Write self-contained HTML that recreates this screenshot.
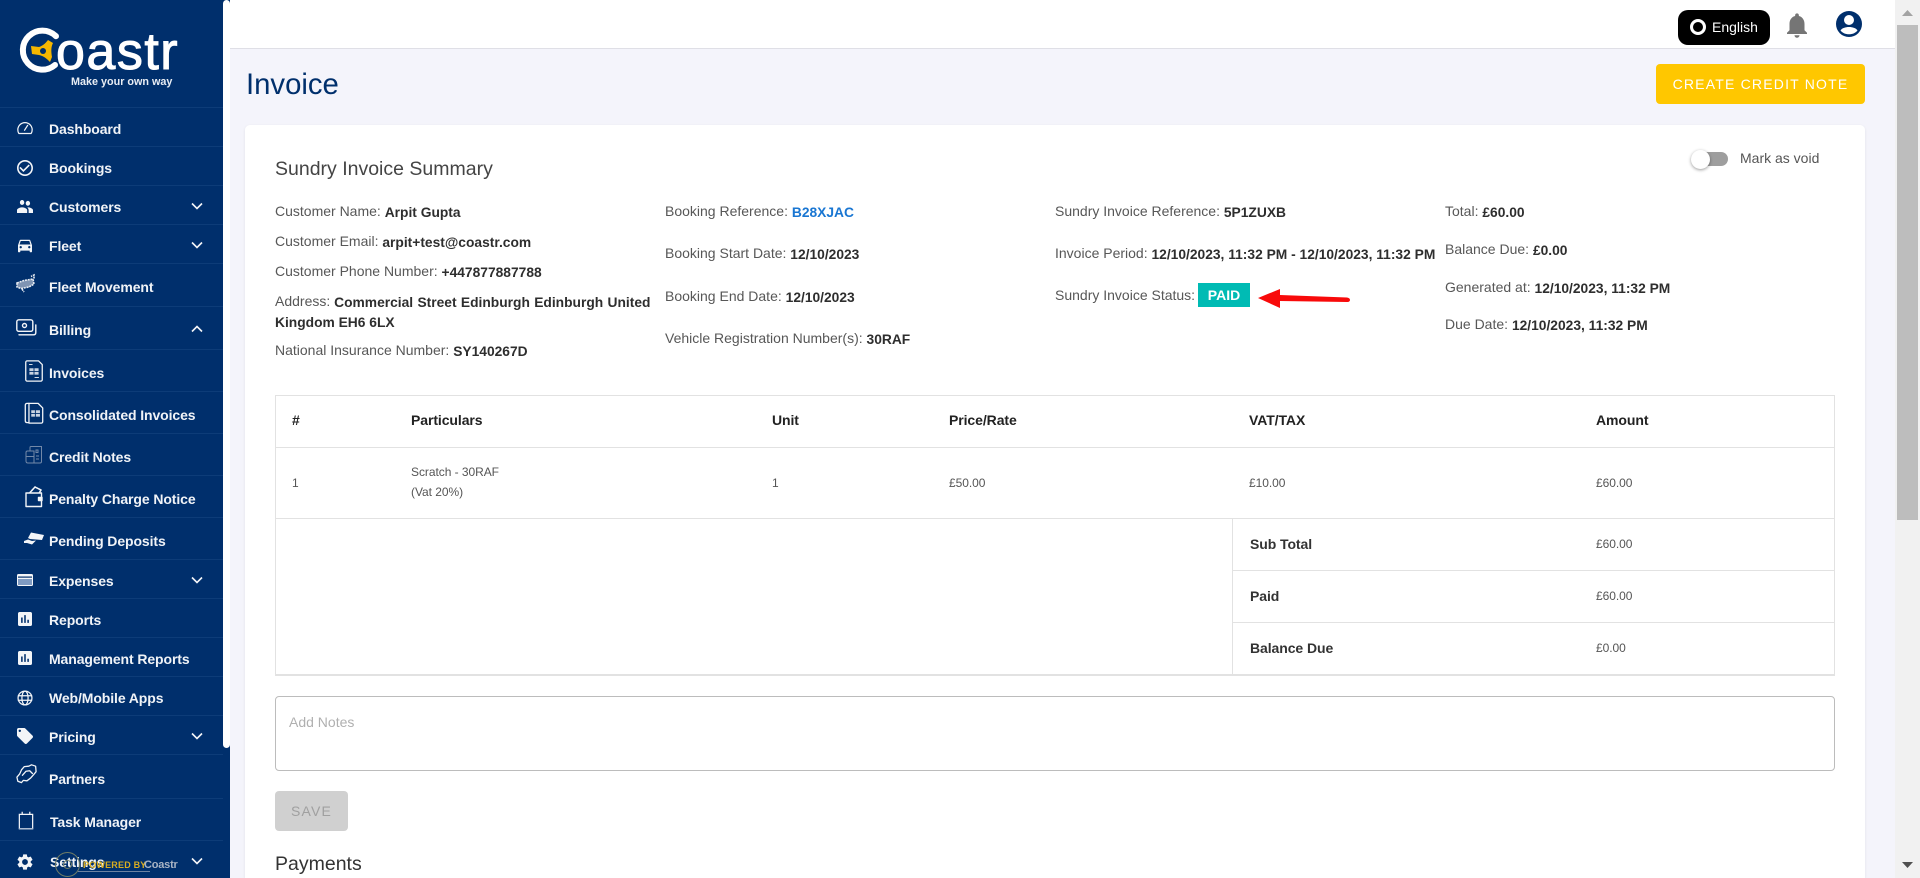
<!DOCTYPE html>
<html lang="en"><head><meta charset="utf-8"><title>Invoice</title>
<style>
*{box-sizing:border-box}
html,body{margin:0;padding:0;width:1920px;height:878px;overflow:hidden;background:#f4f4fb;font-family:"Liberation Sans",Arial,sans-serif}
#wrap{position:relative;width:1920px;height:878px;overflow:hidden;background:#f4f4fb}
.a{position:absolute}
#side{left:0;top:0;width:230px;height:878px;background:#002f6c;overflow:hidden}
#thumb{left:223px;top:0;width:7px;height:748px;background:#fff;border-radius:4px}
.ln{position:absolute;left:0;width:223px;height:1px;background:#0d3c78}
.m{position:absolute;left:49px;height:20px;line-height:20px;font-size:14px;font-weight:700;color:#f0f3f7;white-space:nowrap;letter-spacing:-.1px}
.ic{position:absolute;fill:#f3f5f8}
.st{position:absolute;fill:none;stroke:#f3f5f8;stroke-width:1.4;stroke-linecap:round;stroke-linejoin:round}
.ch{position:absolute;left:191px;width:12px;height:8px;fill:none;stroke:#f3f5f8;stroke-width:1.6}
#top{left:230px;top:0;width:1665px;height:49px;background:#fff;border-bottom:1px solid #dfdfe6}
#sb{left:1895px;top:0;width:25px;height:878px;background:#f1f1f1}
#card{left:245px;top:125px;width:1620px;height:753px;background:#fff;border-radius:5px 5px 0 0;box-shadow:0 1px 3px rgba(0,0,0,.08)}
.r{position:absolute;height:20px;line-height:20px;font-size:14px;color:#575757;white-space:nowrap}
.r b{color:#2e2e2e;font-size:13.8px;position:relative;top:1px}
.h{position:absolute;height:20px;line-height:20px;font-size:14px;font-weight:700;color:#222;white-space:nowrap;letter-spacing:-.08px}
.t{position:absolute;height:20px;line-height:20px;font-size:12px;color:#555;white-space:nowrap;letter-spacing:-.05px}
.tl{position:absolute;background:#e2e2e2}
</style></head><body>
<div id="wrap">
<div id="side" class="a">
  <svg class="a" style="left:15px;top:22px" width="60" height="60" viewBox="0 0 60 60">
    <path d="M41 14.2A19.5 19.5 0 1 0 40 43" fill="none" stroke="#fff" stroke-width="6" stroke-linecap="round"/>
    <path d="M16 24L24 25C27 24 30 22 33 18L38 21C36 25 36 29 37 35L35 40C32 37 29 34 24 33L17 32Z" fill="#f5b700"/>
    <circle cx="28" cy="29" r="3" fill="#002f6c"/>
  </svg>
  <div class="a" style="left:56px;top:22px;font-size:52px;line-height:60px;font-weight:400;color:#fff;letter-spacing:1.5px;-webkit-text-stroke:1px #fff;white-space:nowrap">oastr</div>
  <div class="a" style="left:71px;top:74px;font-size:10.8px;line-height:16px;font-weight:700;color:#e8edf4;white-space:nowrap">Make your own way</div>

  <div class="ln" style="top:107px"></div><div class="ln" style="top:146px"></div><div class="ln" style="top:185px"></div><div class="ln" style="top:224px"></div><div class="ln" style="top:263px"></div><div class="ln" style="top:306px"></div><div class="ln" style="top:349px"></div><div class="ln" style="top:391px"></div><div class="ln" style="top:433px"></div><div class="ln" style="top:475px"></div><div class="ln" style="top:517px"></div><div class="ln" style="top:559px"></div><div class="ln" style="top:598px"></div><div class="ln" style="top:637px"></div><div class="ln" style="top:676px"></div><div class="ln" style="top:715px"></div><div class="ln" style="top:754px"></div><div class="ln" style="top:798px"></div><div class="ln" style="top:840px"></div>

  <div class="m" style="top:119px">Dashboard</div>
  <div class="m" style="top:158px">Bookings</div>
  <div class="m" style="top:197px">Customers</div>
  <div class="m" style="top:236px">Fleet</div>
  <div class="m" style="top:277px">Fleet Movement</div>
  <div class="m" style="top:320px">Billing</div>
  <div class="m" style="top:363px">Invoices</div>
  <div class="m" style="top:405px">Consolidated Invoices</div>
  <div class="m" style="top:447px">Credit Notes</div>
  <div class="m" style="top:489px">Penalty Charge Notice</div>
  <div class="m" style="top:531px">Pending Deposits</div>
  <div class="m" style="top:571px">Expenses</div>
  <div class="m" style="top:610px">Reports</div>
  <div class="m" style="top:649px">Management Reports</div>
  <div class="m" style="top:688px">Web/Mobile Apps</div>
  <div class="m" style="top:727px">Pricing</div>
  <div class="m" style="top:769px">Partners</div>
  <div class="m" style="top:812px;left:50px">Task Manager</div>
  <div class="m" style="top:852px;left:50px">Settings</div>

  <!-- dashboard gauge -->
  <svg class="st" style="left:17px;top:121px" width="16" height="14" viewBox="0 0 18 16"><path d="M2 14.3C.8 12.8.8 11 .8 10A8.200 8.200 0 0 1 17.2 10C17.2 11 17.2 12.800 16 14.3Z"/><path d="M8.5 10.5L12 5"/></svg>
  <!-- check circle -->
  <svg class="ic" style="left:17px;top:160px" width="16" height="16" viewBox="2 2 20 20"><path d="M16.59 7.58L10 14.17l-3.59-3.58L5 12l5 5 8-8zM12 2C6.48 2 2 6.48 2 12s4.48 10 10 10 10-4.48 10-10S17.52 2 12 2zm0 18c-4.42 0-8-3.58-8-8s3.58-8 8-8 8 3.58 8 8-3.58 8-8 8z"/></svg>
  <!-- people -->
  <svg class="ic" style="left:17px;top:200px" width="16" height="13" viewBox="1 4 22 16" preserveAspectRatio="none"><path d="M16 11c1.66 0 2.99-1.34 2.99-3S17.66 5 16 5c-1.66 0-3 1.34-3 3s1.34 3 3 3zm-8-1c1.66 0 3-1.34 3-3S9.66 4 8 4 5 5.340 5 7s1.34 3 3 3zm0 3c-2.33 0-7 1.17-7 3.5V20h14v-3.5c0-2.33-4.67-3.5-7-3.5zm8 0c-.29 0-.62.02-.97.05 1.16.84 1.97 1.97 1.97 3.45V20h6v-3.5c0-2.33-4.67-3.5-7-3.5z"/></svg>
  <!-- car -->
  <svg class="ic" style="left:18px;top:239px" width="14" height="14" viewBox="3 5 18 16"><path d="M18.92 6.01C18.72 5.42 18.16 5 17.5 5h-11c-.66 0-1.21.42-1.42 1.01L3 12v8c0 .55.45 1 1 1h1c.55 0 1-.45 1-1v-1h12v1c0 .55.45 1 1 1h1c.55 0 1-.45 1-1v-8l-2.08-5.99zM6.5 16c-.83 0-1.5-.67-1.5-1.5S5.67 13 6.5 13s1.5.67 1.5 1.5S7.33 16 6.5 16zm11 0c-.83 0-1.5-.67-1.5-1.5s.67-1.5 1.5-1.5 1.5.67 1.5 1.5-.67 1.5-1.5 1.5zM5 11l1.5-4.5h11L19 11H5z"/></svg>
  <!-- fleet movement -->
  <svg class="a" style="left:15px;top:273px" width="22" height="20" viewBox="0 0 22 20" fill="#7f94b3" stroke="#e6ebf2" stroke-width="1.6" stroke-dasharray="2 .8"><path d="M2 10L9 7.5L18 6L19 11L14 14L6 15.5L2 14Z"/><path fill="none" d="M19 5.5L19 2L16 3.5M7 16L9 19"/></svg>
  <!-- billing -->
  <svg class="st" style="left:16px;top:319px" width="21" height="18" viewBox="0 0 21 18"><rect x=".8" y=".8" width="16" height="11.5" rx="2"/><circle cx="8.500" cy="6.500" r="2"/><path d="M3 15.8H17.5C19 15.8 19.8 15 19.8 13.5V6"/></svg>
  <!-- invoices -->
  <svg class="st" style="left:24px;top:360px" width="20" height="22" viewBox="0 0 20 24"><path d="M2.5 1H15L19 5V21.500C19 22.300 18.300 23 17.500 23H2.500C1.700 23 1 22.300 1 21.500V2.500C1 1.700 1.700 1 2.500 1Z"/><rect x="5" y="9" width="10" height="7" fill="#c9d3e2" stroke="none"/><path d="M5 12.500H15M10 9V16" stroke="#002f6c" stroke-width="1"/><path d="M5 5H8M11 19H15" stroke-width="1"/></svg>
  <!-- consolidated -->
  <svg class="st" style="left:24px;top:402px" width="20" height="22" viewBox="0 0 21 24"><path d="M5 1.500H15L20 6.500V21.500C20 22.300 19.300 23 18.500 23H5V2Z"/><path d="M5 1.500H3C1.800 1.500 1 2.300 1 3.500V20.500C1 21.700 1.800 22.500 3 22.500H5"/><rect x="7.500" y="9" width="9.500" height="7" fill="#c9d3e2" stroke="none"/><path d="M7.500 12.500H17M12 9V16" stroke="#002f6c" stroke-width="1"/></svg>
  <!-- credit notes -->
  <svg class="a" style="left:25px;top:446px" width="18" height="18" viewBox="0 0 18 18" fill="none" stroke="#7288a8" stroke-width="1"><path d="M5 5V1.500C5 1 5.500 .5 6 .5H16.500V15.500C16.500 16.500 16 17 15 17H3C1.800 17 1 16.200 1 15V6.500C1 5.800 1.500 5 2.500 5H9V17M1 10.500H9M11 4H13V6.500H11ZM11 10H14M11 13H14"/></svg>
  <!-- penalty -->
  <svg class="st" style="left:25px;top:486px" width="18" height="22" viewBox="0 0 18 22" stroke-width="1.100"><path d="M1 7H16.500V20.500H1Z"/><path d="M5 6.500L10 1L16 4L14.500 6.500" stroke-dasharray="1.500 .8" stroke-width="1.600"/><rect x="13.500" y="11.500" width="3.500" height="3" fill="#f3f5f8"/></svg>
  <!-- pending deposits -->
  <svg class="ic" style="left:24px;top:532px" width="20" height="14" viewBox="0 0 20 14"><path d="M7 .5L20 3L18 8L6 7L4 6ZM0 9L4 7.500L8 9L12 8.500L8 12.500L3 11H0Z"/></svg>
  <!-- credit card -->
  <svg class="a" style="left:17px;top:574px" width="16" height="12" viewBox="0 0 16 12"><rect x="0" y="0" width="16" height="12" rx="1.500" fill="#f3f5f8"/><rect x="1" y="5" width="14" height="6" fill="#7f9bc2"/><rect x="1" y="2.500" width="14" height="1.200" fill="#002f6c"/></svg>
  <!-- assessment -->
  <svg class="ic" style="left:18px;top:612px" width="14" height="14" viewBox="3 3 18 18"><path d="M19 3H5c-1.1 0-2 .9-2 2v14c0 1.1.9 2 2 2h14c1.1 0 2-.9 2-2V5c0-1.1-.9-2-2-2zM9 17H7v-7h2v7zm4 0h-2V7h2v10zm4 0h-2v-4h2v4z"/></svg>
  <svg class="ic" style="left:18px;top:651px" width="14" height="14" viewBox="3 3 18 18"><path d="M19 3H5c-1.1 0-2 .9-2 2v14c0 1.1.9 2 2 2h14c1.1 0 2-.9 2-2V5c0-1.1-.9-2-2-2zM9 17H7v-7h2v7zm4 0h-2V7h2v10zm4 0h-2v-4h2v4z"/></svg>
  <!-- globe -->
  <svg class="st" style="left:17px;top:690px" width="16" height="16" viewBox="0 0 18 18"><circle cx="9" cy="9" r="7.800"/><ellipse cx="9" cy="9" rx="3.500" ry="7.800"/><path d="M1.500 6.500H16.500M1.500 11.500H16.500"/></svg>
  <!-- tag -->
  <svg class="ic" style="left:17px;top:728px" width="16" height="16" viewBox="2 2 20 20"><path d="M21.41 11.58l-9-9C12.05 2.22 11.55 2 11 2H4c-1.1 0-2 .9-2 2v7c0 .55.22 1.05.59 1.42l9 9c.36.36.86.58 1.41.58.55 0 1.05-.22 1.41-.59l7-7c.37-.36.59-.86.59-1.41 0-.55-.23-1.06-.59-1.42zM5.5 7C4.67 7 4 6.33 4 5.5S4.67 4 5.5 4 7 4.67 7 5.5 6.33 7 5.5 7z"/></svg>
  <!-- partners -->
  <svg class="st" style="left:16px;top:763px" width="21" height="21" viewBox="0 0 23 22" stroke-width="1.800"><path d="M6 7L9 3.500L14 3L17 1.500L21.500 3L22 9L19.500 12L16 16L12 19L8 18.500L6 21L2 19.500L1 15L4 11.500Z"/><path d="M7 13L11 8.500L15 8L18 11"/></svg>
  <!-- calendar -->
  <svg class="a" style="left:18px;top:811px" width="16" height="19" viewBox="0 0 16 20" fill="none"><path d="M1 3.500H15V18.500H1Z" stroke="#f3f5f8" stroke-width="1.300"/><path d="M4 .8V4M12 .8V4" stroke="#f3f5f8" stroke-width="1.300"/><path d="M.5 18.800H15.500" stroke="#9fb2cc" stroke-width="1.500"/></svg>
  <!-- gear -->
  <svg class="ic" style="left:17px;top:854px" width="16" height="16" viewBox="2 2 20 20"><path d="M19.14 12.94c.04-.3.06-.61.06-.94 0-.32-.02-.64-.07-.94l2.03-1.58c.18-.14.23-.41.12-.61l-1.92-3.32c-.12-.22-.37-.29-.59-.22l-2.39.96c-.5-.38-1.03-.7-1.62-.94l-.36-2.54c-.04-.24-.24-.41-.48-.41h-3.84c-.24 0-.43.17-.47.41l-.36 2.54c-.59.24-1.13.57-1.62.94l-2.39-.96c-.22-.08-.47 0-.59.22L2.74 8.87c-.12.21-.08.47.12.61l2.03 1.58c-.05.3-.09.63-.09.94s.02.64.07.94l-2.03 1.58c-.18.14-.23.41-.12.61l1.92 3.32c.12.22.37.29.59.22l2.39-.96c.5.38 1.03.7 1.62.94l.36 2.54c.05.24.24.41.48.41h3.84c.24 0 .44-.17.47-.41l.36-2.54c.59-.24 1.13-.56 1.62-.94l2.39.96c.22.08.47 0 .59-.22l1.92-3.32c.12-.22.07-.47-.12-.61l-2.01-1.58zM12 15.6c-1.98 0-3.6-1.62-3.6-3.6s1.62-3.6 3.6-3.6 3.6 1.62 3.6 3.6-1.62 3.6-3.6 3.6z"/></svg>

  <!-- chevrons -->
  <svg class="ch" style="top:202px" viewBox="0 0 12 8"><path d="M1 1.500L6 6.500L11 1.500"/></svg>
  <svg class="ch" style="top:241px" viewBox="0 0 12 8"><path d="M1 1.500L6 6.500L11 1.500"/></svg>
  <svg class="ch" style="top:325px" viewBox="0 0 12 8"><path d="M1 6.500L6 1.500L11 6.500"/></svg>
  <svg class="ch" style="top:576px" viewBox="0 0 12 8"><path d="M1 1.500L6 6.500L11 1.500"/></svg>
  <svg class="ch" style="top:732px" viewBox="0 0 12 8"><path d="M1 1.500L6 6.500L11 1.500"/></svg>
  <svg class="ch" style="top:857px" viewBox="0 0 12 8"><path d="M1 1.500L6 6.500L11 1.500"/></svg>

  <!-- powered by -->
  <svg class="a" style="left:54px;top:851px" width="27" height="27" viewBox="0 0 27 27" fill="none" stroke="#6f7c66" stroke-width="1"><circle cx="13.500" cy="13.500" r="12"/><circle cx="13.500" cy="13.500" r="4"/></svg>
  <div class="a" style="left:83px;top:857px;font-size:9px;line-height:16px;font-weight:700;color:#d9ad20;letter-spacing:.2px;white-space:nowrap">POWERED BY</div>
  <div class="a" style="left:144px;top:856px;font-size:11px;line-height:18px;font-weight:700;color:#a9b4c4;letter-spacing:-.2px;white-space:nowrap">Coastr</div>
  <div class="a" style="left:78px;top:871px;width:72px;height:1px;background:#6d82a1"></div>
  <div id="thumb" class="a"></div>
</div>

<div id="top" class="a"></div>
<div class="a" style="left:1678px;top:10px;width:92px;height:35px;background:#000;border-radius:10px"></div>
<div class="a" style="left:1690px;top:19px;width:16px;height:16px;border:3px solid #fff;border-radius:50%"></div>
<div class="a" style="left:1712px;top:17px;height:20px;line-height:20px;font-size:14px;color:#fff;white-space:nowrap">English</div>
<svg class="a" style="left:1787px;top:13px" width="20" height="25" viewBox="4 2.5 16 19.5"><path fill="#757575" d="M12 22c1.1 0 2-.9 2-2h-4c0 1.1.9 2 2 2zm6-6v-5c0-3.07-1.63-5.64-4.5-6.32V4c0-.83-.67-1.5-1.5-1.5s-1.5.67-1.5 1.5v.68C7.64 5.36 6 7.92 6 11v5l-2 2v1h16v-1l-2-2z"/></svg>
<svg class="a" style="left:1836px;top:11px" width="26" height="26" viewBox="0 0 26 26"><circle cx="13" cy="13" r="13" fill="#002f6c"/><circle cx="13" cy="9" r="5" fill="#fff"/><path d="M4.500 19.500C6 17 9.500 16 13 16C16.500 16 20 17 21.500 19.500C19.500 22 16.500 23.300 13 23.300C9.500 23.300 6.500 22 4.500 19.500Z" fill="#fff"/></svg>

<div class="a" style="left:246px;top:65px;height:40px;line-height:40px;font-size:29.3px;color:#002f6c;white-space:nowrap">Invoice</div>
<div class="a" style="left:1656px;top:64px;width:209px;height:40px;background:#ffc700;border-radius:4px;color:#fff;font-size:14px;line-height:40px;text-align:center;letter-spacing:1.2px;white-space:nowrap">CREATE CREDIT NOTE</div>

<div id="card" class="a"></div>

<div class="a" style="left:275px;top:156px;height:26px;line-height:26px;font-size:19.5px;color:#444;white-space:nowrap">Sundry Invoice Summary</div>

<!-- switch -->
<div class="a" style="left:1695px;top:152px;width:33px;height:14px;background:#9e9e9e;border-radius:7px"></div>
<div class="a" style="left:1691px;top:150px;width:19px;height:19px;background:#fff;border-radius:50%;box-shadow:0 1px 3px rgba(0,0,0,.4)"></div>
<div class="r" style="left:1740px;top:148px;color:#555">Mark as void</div>

<!-- col 1 -->
<div class="r" style="left:275px;top:201px">Customer Name: <b>Arpit Gupta</b></div>
<div class="r" style="left:275px;top:231px">Customer Email: <b>arpit+test@coastr.com</b></div>
<div class="r" style="left:275px;top:261px">Customer Phone Number: <b>+447877887788</b></div>
<div class="r" style="left:275px;top:291px">Address: <b style="word-spacing:.5px">Commercial Street Edinburgh Edinburgh United</b></div>
<div class="r" style="left:275px;top:311px"><b>Kingdom EH6 6LX</b></div>
<div class="r" style="left:275px;top:340px">National Insurance Number: <b>SY140267D</b></div>
<!-- col 2 -->
<div class="r" style="left:665px;top:201px">Booking Reference: <b style="color:#1976d2">B28XJAC</b></div>
<div class="r" style="left:665px;top:243px">Booking Start Date: <b>12/10/2023</b></div>
<div class="r" style="left:665px;top:286px">Booking End Date: <b>12/10/2023</b></div>
<div class="r" style="left:665px;top:328px">Vehicle Registration Number(s): <b>30RAF</b></div>
<!-- col 3 -->
<div class="r" style="left:1055px;top:201px">Sundry Invoice Reference: <b>5P1ZUXB</b></div>
<div class="r" style="left:1055px;top:243px">Invoice Period: <b>12/10/2023, 11:32 PM - 12/10/2023, 11:32 PM</b></div>
<div class="r" style="left:1055px;top:285px">Sundry Invoice Status:</div>
<div class="a" style="left:1198px;top:283px;width:52px;height:24px;line-height:25px;background:#00bbb4;color:#fff;font-size:14px;font-weight:700;text-align:center">PAID</div>
<svg class="a" style="left:1256px;top:285px" width="95" height="24" viewBox="0 0 95 24"><path d="M2 13L24 4V10L91 12.500C93 12.800 94 13.800 94 15C94 16.200 93 17.200 91 17L24 16V23Z" fill="#f80a0a"/></svg>
<!-- col 4 -->
<div class="r" style="left:1445px;top:201px">Total: <b>£60.00</b></div>
<div class="r" style="left:1445px;top:239px">Balance Due: <b>£0.00</b></div>
<div class="r" style="left:1445px;top:277px">Generated at: <b>12/10/2023, 11:32 PM</b></div>
<div class="r" style="left:1445px;top:314px">Due Date: <b>12/10/2023, 11:32 PM</b></div>

<!-- table -->
<div class="tl" style="left:275px;top:395px;width:1560px;height:1px"></div>
<div class="tl" style="left:275px;top:447px;width:1560px;height:1px"></div>
<div class="tl" style="left:275px;top:518px;width:1560px;height:1px"></div>
<div class="tl" style="left:1232px;top:570px;width:603px;height:1px"></div>
<div class="tl" style="left:1232px;top:622px;width:603px;height:1px"></div>
<div class="tl" style="left:275px;top:674px;width:1560px;height:2px"></div>
<div class="tl" style="left:275px;top:395px;width:1px;height:281px"></div>
<div class="tl" style="left:1834px;top:395px;width:1px;height:281px"></div>
<div class="tl" style="left:1232px;top:518px;width:1px;height:157px"></div>

<div class="h" style="left:292px;top:410px">#</div>
<div class="h" style="left:411px;top:410px">Particulars</div>
<div class="h" style="left:772px;top:410px">Unit</div>
<div class="h" style="left:949px;top:410px">Price/Rate</div>
<div class="h" style="left:1249px;top:410px">VAT/TAX</div>
<div class="h" style="left:1596px;top:410px">Amount</div>

<div class="t" style="left:292px;top:473px">1</div>
<div class="t" style="left:411px;top:462px">Scratch - 30RAF</div>
<div class="t" style="left:411px;top:482px">(Vat 20%)</div>
<div class="t" style="left:772px;top:473px">1</div>
<div class="t" style="left:949px;top:473px">£50.00</div>
<div class="t" style="left:1249px;top:473px">£10.00</div>
<div class="t" style="left:1596px;top:473px">£60.00</div>

<div class="h" style="left:1250px;top:534px;color:#333">Sub Total</div>
<div class="t" style="left:1596px;top:534px">£60.00</div>
<div class="h" style="left:1250px;top:586px;color:#333">Paid</div>
<div class="t" style="left:1596px;top:586px">£60.00</div>
<div class="h" style="left:1250px;top:638px;color:#333">Balance Due</div>
<div class="t" style="left:1596px;top:638px">£0.00</div>

<!-- notes -->
<div class="a" style="left:275px;top:696px;width:1560px;height:75px;border:1px solid #bcbcbc;border-radius:4px;background:#fff"></div>
<div class="a" style="left:289px;top:712px;height:20px;line-height:20px;font-size:14px;color:#b0b0b0;white-space:nowrap">Add Notes</div>
<div class="a" style="left:275px;top:791px;width:73px;height:40px;background:#d0d0d0;border-radius:4px;color:#a0a0a0;font-size:14px;line-height:40px;text-align:center;letter-spacing:1.2px">SAVE</div>
<div class="a" style="left:275px;top:851px;height:26px;line-height:26px;font-size:19.5px;color:#333;white-space:nowrap">Payments</div>

<!-- page scrollbar -->
<div id="sb" class="a"></div>
<svg class="a" style="left:1901px;top:9px" width="13" height="8" viewBox="0 0 13 8"><path d="M6.5 1L12 7H1Z" fill="#a3a3a3"/></svg>
<div class="a" style="left:1897px;top:25px;width:21px;height:495px;background:#bdbdbd"></div>
<svg class="a" style="left:1901px;top:861px" width="13" height="8" viewBox="0 0 13 8"><path d="M1 1H12L6.5 7Z" fill="#505050"/></svg>
</div>
</body></html>
